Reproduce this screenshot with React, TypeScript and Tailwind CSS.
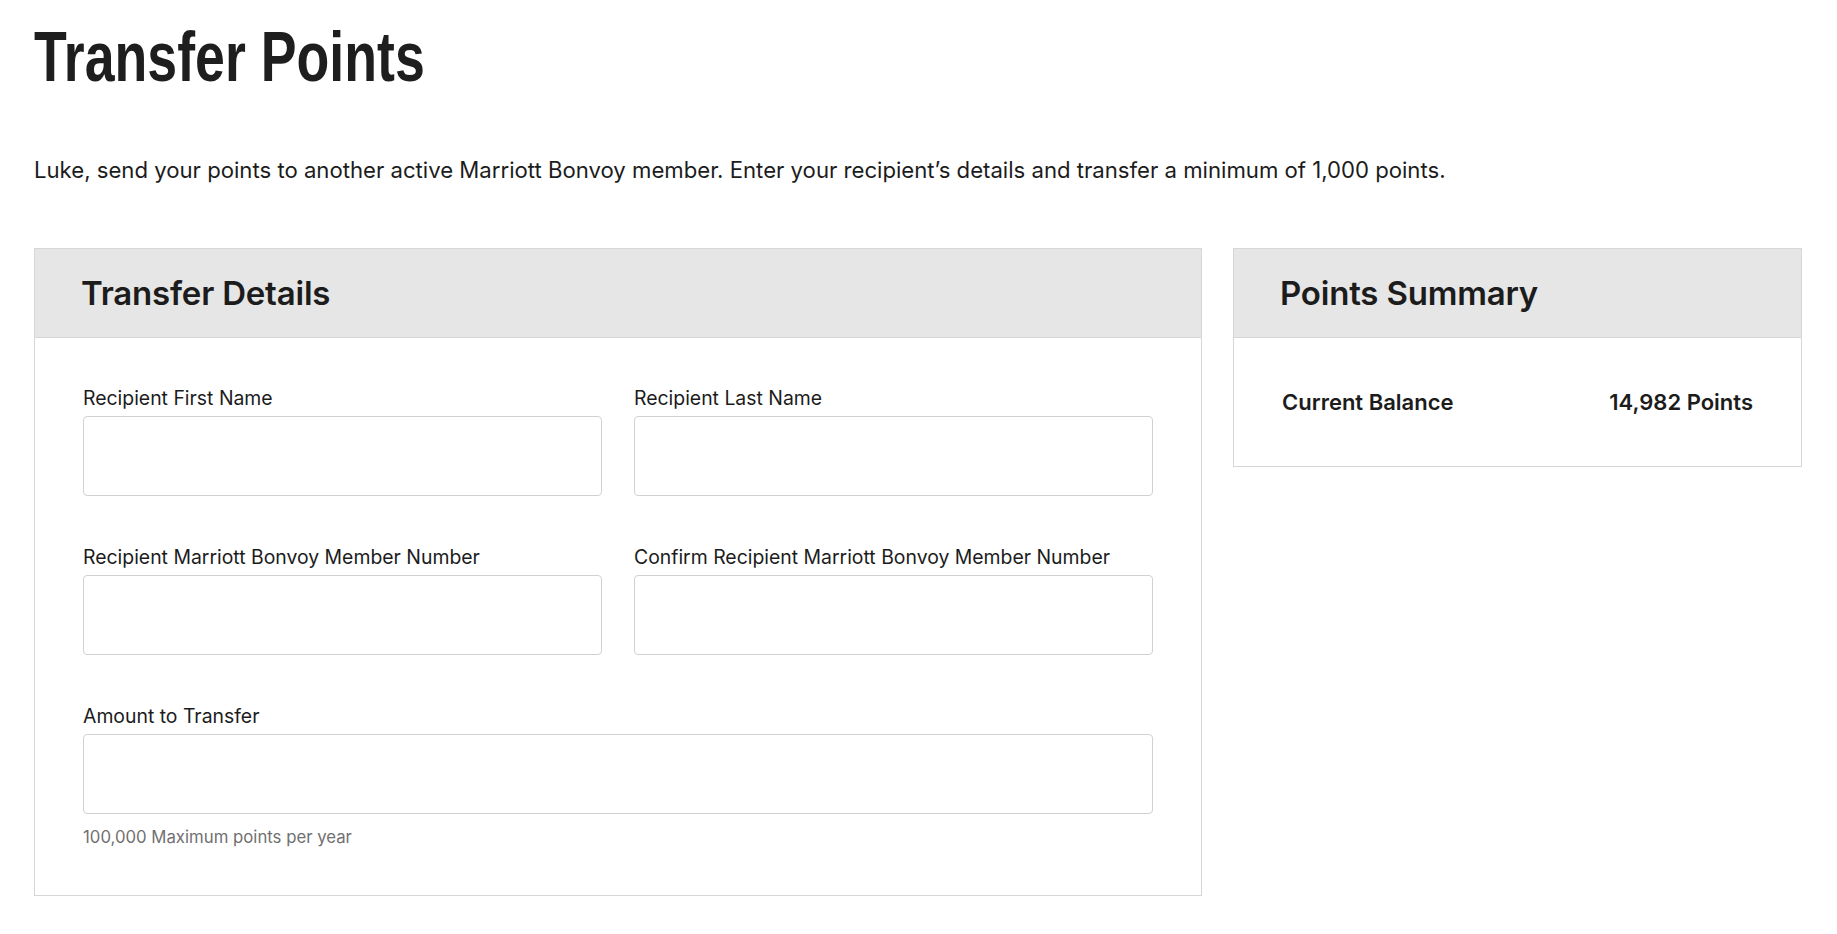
import type { ReactNode } from 'react';

const bodyFont = 'font-["Inter","Liberation_Sans",sans-serif]';

function Card({ title, children, className }: { title: string; children: ReactNode; className?: string }) {
	return (
		<section className={`border border-[#d6d6d6] bg-white ${className ?? ''}`}>
			<div className="flex h-[89px] items-center border-b border-[#d6d6d6] bg-[#e6e6e6] pl-[46px]">
				<h2 className="text-[33px] font-semibold leading-none tracking-[-0.2px] text-[#1c1c1c]">{title}</h2>
			</div>
			{children}
		</section>
	);
}

function Field({ label, id }: { label: string; id: string }) {
	return (
		<div>
			<label htmlFor={id} className="block text-[19.4px] leading-[24px] text-[#1c1c1c]">
				{label}
			</label>
			<input
				id={id}
				type="text"
				className="mt-[6px] block h-[80px] w-full rounded-[4px] border border-[#d1d1d1] bg-white px-4 outline-none"
			/>
		</div>
	);
}

export default function App() {
	return (
		<main className={`min-h-screen bg-white pl-[34px] pr-[35px] ${bodyFont}`}>
			<h1 className="pt-[21px] font-['Liberation_Sans',Arial,sans-serif] text-[71px] font-bold leading-[71px] text-[#1e1e1e]">
				<span className="inline-block origin-left scale-x-[0.756]">Transfer Points</span>
			</h1>

			<p className="mt-[64px] text-[22.15px] leading-[28px] text-[#1c1c1c]">
				Luke, send your points to another active Marriott Bonvoy member. Enter your recipient’s details and transfer a
				minimum of 1,000 points.
			</p>

			<div className="mt-[64px] flex items-start gap-[31px]">
				<Card title="Transfer Details" className="flex-1">
					<div className="px-[48px] pb-[48px] pt-[48px]">
						<div className="grid grid-cols-2 gap-x-8 gap-y-[49px]">
							<Field id="firstName" label="Recipient First Name" />
							<Field id="lastName" label="Recipient Last Name" />
							<Field id="memberNumber" label="Recipient Marriott Bonvoy Member Number" />
							<Field id="confirmMemberNumber" label="Confirm Recipient Marriott Bonvoy Member Number" />
							<div className="col-span-2">
								<Field id="amount" label="Amount to Transfer" />
								<p className="mt-[13px] text-[16.75px] leading-[20px] text-[#707070]">100,000 Maximum points per year</p>
							</div>
						</div>
					</div>
				</Card>

				<Card title="Points Summary" className="w-[569px]">
					<div className="flex items-center justify-between px-[48px] py-[48px] text-[22px] font-semibold leading-[32px] text-[#1c1c1c]">
						<span>Current Balance</span>
						<span>14,982 Points</span>
					</div>
				</Card>
			</div>
		</main>
	);
}
